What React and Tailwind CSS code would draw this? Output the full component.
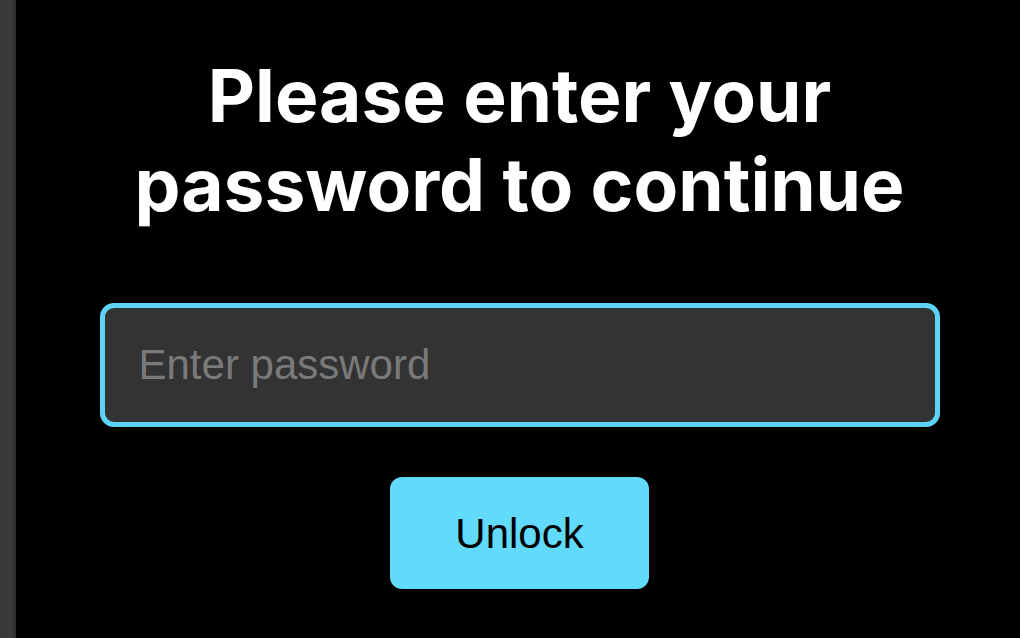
import React, { useState } from "react";

const App = () => {
  const [password, setPassword] = useState("");

  return (
    <div className="flex w-[1020px] h-[638px] bg-black overflow-hidden">
      {/* side strip */}
      <div className="w-[16px] h-full bg-[#3a3a3a] border-r-[3px] border-[#2e2e2e] shrink-0" />

      {/* main */}
      <div className="flex-1 flex flex-col items-center pt-[51px] pl-[3px]">
        <h1
          className="text-white text-[73px] leading-[89px] font-bold text-center"
          style={{ fontFamily: "Inter, 'Noto Sans', sans-serif" }}
        >
          Please enter your
          <br />
          password to continue
        </h1>

        <input
          type="password"
          value={password}
          onChange={(e) => setPassword(e.target.value)}
          placeholder="Enter password"
          className="mt-[74px] w-[840px] h-[124px] px-[34px] bg-[#333333] border-[5px] border-[#5dd3f6] rounded-[14px] text-[42px] text-white placeholder:text-[#7a7a7a] outline-none"
          style={{ fontFamily: "'Liberation Sans', Arial, sans-serif" }}
        />

        <button
          className="mt-[50px] w-[259px] h-[112px] bg-[#61dafb] rounded-[12px] text-[42px] text-black"
          style={{ fontFamily: "'Liberation Sans', Arial, sans-serif" }}
        >
          Unlock
        </button>
      </div>
    </div>
  );
};

export default App;
